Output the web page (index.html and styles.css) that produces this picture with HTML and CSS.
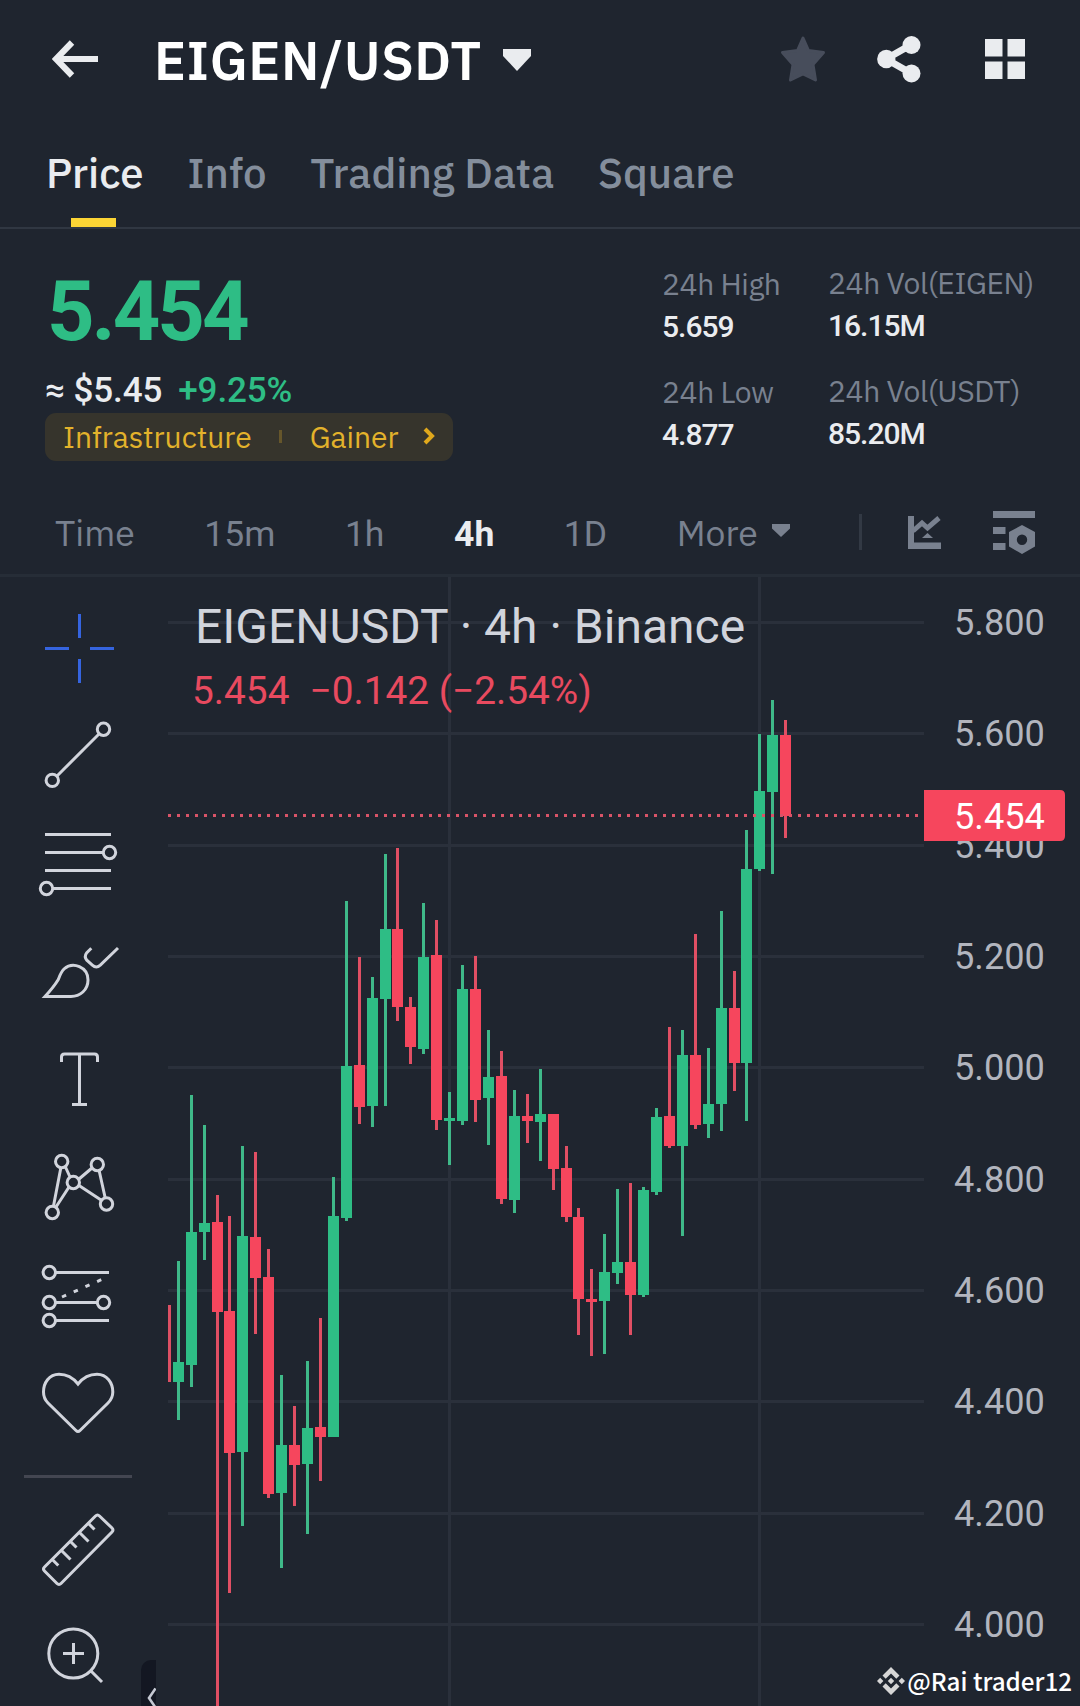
FILE: index.html
```html
<!DOCTYPE html>
<html lang="en">
<head>
    <title>EIGEN/USDT</title>
    <meta charset="UTF-8" />
    <meta name="viewport" content="width=device-width, initial-scale=1.0" />
    <link rel="stylesheet" href="styles.css">
</head>
<body>
    <header class="top-bar">
        <svg class="back" width="46" height="38" viewBox="0 0 46 38">
            <path d="M20 2.500L4 19l16 16.500M4 19h42" fill="none" stroke="#eaecef" stroke-width="6.200" />
        </svg>
        <h1>EIGEN/USDT</h1>
        <svg class="pair-arrow" width="28" height="22" viewBox="0 0 28 22">
            <path d="M0 0h28v7L14 22 0 7z" fill="#eaecef" />
        </svg>
        <div class="actions">
            <svg width="46" height="48" viewBox="0 0 46 48">
                <path d="M23 3l5.500 12.500 15 2-10.500 12 2.500 15.500L23 39l-12.500 6L13 29.500l-10.500-12 15-2z" fill="#474d5b" stroke="#474d5b" stroke-width="3" stroke-linejoin="round" />
            </svg>
            <svg class="share" width="44" height="48" viewBox="0 0 44 48">
                <path d="M9 24L34.500 9.500M9 24l25.500 14.500" stroke="#eaecef" stroke-width="7" />
                <g fill="#eaecef">
                    <circle cx="9.300" cy="24" r="9.200" />
                    <circle cx="34.500" cy="10" r="9" />
                    <circle cx="34.500" cy="38.500" r="9" />
                </g>
            </svg>
            <svg width="40" height="40" viewBox="0 0 40 40">
                <path d="M0 0h17.500v17.500H0zM22.500 0H40v17.500H22.500zM0 22.500h17.500V40H0zM22.500 22.500H40V40H22.500z" fill="#eaecef" />
            </svg>
        </div>
    </header>

    <nav class="tabs">
        <a class="tab active">Price</a>
        <a class="tab">Info</a>
        <a class="tab">Trading Data</a>
        <a class="tab">Square</a>
    </nav>

    <section class="ticker">
        <div class="quote">
            <div class="last-price">5.454</div>
            <div class="quote-sub">
                <span>≈ $5.45</span>
                <span class="change">+9.25%</span>
            </div>
            <div class="tags">
                <span>Infrastructure</span>
                <i class="tag-sep"></i>
                <span>Gainer</span>
                <svg class="tag-arrow" width="12" height="18" viewBox="0 0 12 18">
                    <path d="M2 2l7 7-7 7" fill="none" stroke="#e0a81c" stroke-width="4" />
                </svg>
            </div>
        </div>
        <div class="stats">
            <dl>
                <dt>24h High</dt>
                <dd>5.659</dd>
                <dt>24h Low</dt>
                <dd>4.877</dd>
            </dl>
            <dl class="volumes">
                <dt>24h Vol(EIGEN)</dt>
                <dd>16.15M</dd>
                <dt>24h Vol(USDT)</dt>
                <dd>85.20M</dd>
            </dl>
        </div>
    </section>

    <nav class="intervals">
        <a>Time</a>
        <a class="num">15m</a>
        <a class="num">1h</a>
        <a class="num active">4h</a>
        <a class="num">1D</a>
        <a>More</a>
        <svg class="more-arrow" width="18" height="13" viewBox="0 0 18 13">
            <path d="M0 0h18v4.500L9 13 0 4.500z" fill="#79818f" />
        </svg>
        <div class="interval-tools">
            <svg width="33" height="33" viewBox="0 0 33 33">
                <path d="M0 0h6v26.500h27V33H0z" fill="#79818f" />
                <path d="M5 15l9-8 5.500 5L31 2" fill="none" stroke="#79818f" stroke-width="5" />
                <path d="M14 22l5.500-5 5.500 5z" fill="#79818f" />
            </svg>
            <svg width="42" height="43" viewBox="0 0 42 43">
                <path d="M0 0h42v7H0zM0 16h12.500v7H0zM0 32h12.500v7H0z" fill="#79818f" />
                <path d="M29 14l13 7v14.500L29 43l-13-7.500V21zM29 23.500a5.200 5.200 0 1 0 0 10.400 5.200 5.200 0 1 0 0-10.400z" fill="#79818f" fill-rule="evenodd" />
            </svg>
        </div>
    </nav>

    <main class="chart-area">
        <aside class="toolbar">
            <!-- crosshair -->
            <svg class="tool selected" viewBox="0 0 84 84">
                <path d="M9 42.500h24M54 42.500h24M43.500 8v24M43.500 53v24" />
            </svg>
            <!-- trend line -->
            <svg class="tool" viewBox="0 0 84 84">
                <path d="M21 62l42-42" />
                <circle cx="67.500" cy="15.300" r="6.200" />
                <circle cx="16.300" cy="66.400" r="6.200" />
            </svg>
            <!-- fib retracement -->
            <svg class="tool" viewBox="0 0 84 84">
                <path d="M9 12.500h66M9 30.500h58M9 48.500h66M17 66.500h58" />
                <circle cx="73.500" cy="30.500" r="6.200" />
                <circle cx="10.500" cy="66.500" r="6.200" />
            </svg>
            <!-- brush -->
            <svg class="tool" viewBox="0 0 84 84">
                <path d="M9 66.500C15 60 19 55 22.300 49.500C24 45 25 42 28 39C37 31 52 37 52 50C52 60 44 66.500 35 66.500z" />
                <path d="M55.300 18.200l-4.500 4.500q-3 4 0 7.500l5.500 5q4 3.500 8 0L82 18" />
            </svg>
            <!-- text -->
            <svg class="tool" viewBox="0 0 84 84">
                <path d="M25.500 24v-5q0-3 3-3h30q3 0 3 3v5M43.500 16v50.500M36 66.500h15" />
            </svg>
            <!-- pattern -->
            <svg class="tool" viewBox="0 0 84 84">
                <path d="M25 21l-7.500 39M29 20l5 11M33 41L20 61M43 33l13-11M63 24l6 27M43 39.500L65 54" />
                <circle cx="25.700" cy="15.500" r="6.200" />
                <circle cx="61.300" cy="18.500" r="6.200" />
                <circle cx="37.300" cy="36.500" r="6.200" />
                <circle cx="16.300" cy="66.500" r="6.200" />
                <circle cx="70.500" cy="58" r="6.200" />
            </svg>
            <!-- forecast -->
            <svg class="tool" viewBox="0 0 84 84">
                <path d="M20 18.500h53M20 48.500h41M20 66.500h53" />
                <path d="M26 43l42-18.500" stroke-dasharray="4.500 8.300" />
                <circle cx="13.300" cy="18.500" r="6.200" />
                <circle cx="13.300" cy="48.500" r="6.200" />
                <circle cx="67.500" cy="48.500" r="6.200" />
                <circle cx="13.300" cy="66.500" r="6.200" />
            </svg>
            <!-- favourites -->
            <svg class="tool" viewBox="0 0 84 84">
                <path d="M42 22C36 14.500 30 12.300 23 12.300C13 12.300 7.500 21 7.500 30C7.500 35 9 38 12 41L40 68.500q2 2 4 0L72 41C75 38 76.800 35 76.800 30C76.800 21 71 12.300 61 12.300C54 12.300 48 14.500 42 22z" />
            </svg>
            <hr>
            <!-- ruler -->
            <svg class="tool" viewBox="0 0 84 84">
                <path d="M59.500 8L8.500 59q-2 2 0 4L21 75.500q2 2 4 0L76 24q2-2 0-4L63.500 8q-2-2-4 0z" />
                <path d="M16.300 51.500l6 6M25.500 42.500l9 9M34.500 33.500l6 6M43.500 24.500l9 9M52.500 15.500l6 6" />
            </svg>
            <!-- zoom in -->
            <svg class="tool" viewBox="0 0 84 84">
                <circle cx="37.300" cy="37.500" r="24.500" />
                <path d="M27 37.500h21M37.500 27v21M55 55l11 11" />
            </svg>
        </aside>

        <div class="chart">
            <svg id="chart" width="912" height="1129" viewBox="168 577 912 1129"></svg>
            <div class="legend">
                <div class="legend-title">EIGENUSDT · 4h · Binance</div>
                <div class="legend-values"><span>5.454</span><span>−0.142 (−2.54%)</span></div>
            </div>
        </div>

        <div class="collapse">
            <svg width="15" height="46" viewBox="0 0 15 46">
                <path d="M14.500 28.500L8 38l6.500 9.500" fill="none" stroke="#c5c9d3" stroke-width="2.600" />
            </svg>
        </div>

        <div class="watermark">
            <svg width="28" height="28" viewBox="0 0 28 28">
                <path d="M14 0l8.500 8.500-3.200 3.200L14 6.400l-5.300 5.300-3.200-3.200zM14 28l8.500-8.500-3.200-3.200-5.300 5.300-5.300-5.300-3.200 3.200zM14 10.800l3.200 3.200-3.200 3.200-3.200-3.200zM3.200 10.800L6.400 14l-3.200 3.200L0 14zM24.800 10.800L28 14l-3.200 3.200-3.200-3.200z" fill="#d6d6d6" />
            </svg>
            <span>@Rai trader12</span>
        </div>
    </main>

    <script src="chart.js"></script>
</body>
</html>
```
FILE: styles.css
```css
* {
    margin: 0;
    padding: 0;
    box-sizing: border-box;
}

body {
    width: 1080px;
    height: 1706px;
    overflow: hidden;
    font-family: "IBM Plex Sans", Roboto, sans-serif;
    color: #eaecef;
    background: #1f252f;
}

svg {
    display: block;
    flex: none;
}

/* Top bar */
.top-bar {
    display: flex;
    align-items: center;
    height: 118px;
    padding: 0 55px 0 52px;
}

.top-bar h1 {
    margin-left: 56px;
    width: 326px;
    font-size: 53.5px;
    font-weight: 600;
    line-height: 118px;
    padding-top: 1px;
    letter-spacing: 0.5px;
    color: #fff;
    white-space: nowrap;
}

.pair-arrow {
    margin: 2px 0 0 23px;
}

.actions {
    display: flex;
    align-items: center;
    margin-left: auto;
}

.share {
    margin: 0 64px 0 51px;
}

/* Page tabs */
.tabs {
    display: flex;
    gap: 43.6px;
    height: 111px;
    padding-left: 46px;
    border-bottom: 2px solid #303742;
}

.tab {
    position: relative;
    line-height: 110px;
    font-size: 42px;
    font-weight: 500;
    color: #848e9c;
}

.tab.active {
    color: #eaecef;
}

.tab.active::after {
    content: "";
    position: absolute;
    left: 25px;
    bottom: 0;
    width: 45px;
    height: 9px;
    background: #fcd535;
}

/* Ticker */
.ticker {
    display: flex;
    justify-content: space-between;
    height: 261px;
    padding: 27px 0 0 45px;
}

.last-price {
    height: 112px;
    padding-left: 2px;
    line-height: 112px;
    font-family: Roboto, sans-serif;
    font-size: 83px;
    font-weight: 700;
    letter-spacing: -3px;
    color: #2ebd85;
}

.quote-sub {
    display: flex;
    gap: 16px;
    height: 45px;
    line-height: 46px;
    font-family: Roboto, sans-serif;
    font-size: 35px;
    font-weight: 500;
    letter-spacing: -0.1px;
}

.change {
    color: #2ebd85;
}

.tags {
    display: flex;
    align-items: center;
    width: 408px;
    height: 48px;
    padding: 0 0 2px 18px;
    border-radius: 11px;
    background: #36342c;
    font-size: 30px;
    color: #e3b22b;
}

.tag-sep {
    width: 3px;
    height: 13px;
    margin: 0 28px 0 27px;
    background: #66562b;
}

.tag-arrow {
    margin-left: 24px;
}

.stats {
    display: flex;
    width: 418px;
    padding-top: 7px;
    font-size: 30px;
}

.stats dl {
    width: 166px;
}

.stats dt {
    line-height: 42px;
    color: #79818f;
    letter-spacing: -0.4px;
    white-space: nowrap;
}

.stats dd {
    margin-bottom: 22px;
    line-height: 44px;
    font-family: Roboto, sans-serif;
    font-weight: 500;
    letter-spacing: -1px;
}

.stats .volumes {
    width: auto;
    margin-top: -1px;
}

/* Interval picker */
.intervals {
    display: flex;
    align-items: center;
    gap: 69.6px;
    height: 87px;
    padding: 2px 44px 0 55px;
    border-bottom: 3px solid #262d37;
    font-size: 35.5px;
    color: #79818f;
}

.intervals .num {
    padding-top: 2px;
    font-family: Roboto, sans-serif;
}

.intervals .active {
    font-weight: 700;
    color: #eaecef;
}

.more-arrow {
    margin-left: -55px;
    margin-top: -6px;
}

.interval-tools {
    display: flex;
    flex: none;
    align-items: center;
    gap: 52px;
    height: 36px;
    margin: -2px 0 0 auto;
    padding-left: 46px;
    border-left: 3px solid #323944;
}

/* the last gap is narrower than the rest */
.more-arrow + .interval-tools {
    margin-left: -1px;
}

/* Chart */
.chart-area {
    position: relative;
    display: flex;
    height: 1129px;
}

.toolbar {
    display: flex;
    flex-direction: column;
    gap: 24px;
    width: 168px;
    padding: 29px 0 0 36px;
}

.tool {
    width: 84px;
    height: 84px;
    fill: none;
    stroke: #d1d4dc;
    stroke-width: 3;
}

.tool.selected {
    stroke: #3564df;
}

.toolbar hr {
    width: 108px;
    height: 3px;
    margin: 5px 0 6px -12px;
    border: 0;
    background: #434651;
}

.chart {
    position: relative;
    width: 912px;
}

.legend {
    position: absolute;
    left: 24px;
    top: 20px;
    font-family: Roboto, sans-serif;
    white-space: nowrap;
}

.legend-title {
    padding-left: 3px;
    line-height: 60px;
    font-size: 48px;
    color: #d1d4dc;
}

.legend-values {
    display: flex;
    gap: 20px;
    line-height: 68px;
    font-size: 38.8px;
    color: #e84a5f;
}

.axis-label {
    font: 36.2px Roboto, sans-serif;
    fill: #b2b5be;
}

.axis-label.last {
    fill: #fff;
}

.collapse {
    position: absolute;
    left: 141px;
    bottom: 0;
    width: 15px;
    height: 46px;
    border-radius: 10px 0 0 0;
    background: #131722;
}

.watermark {
    position: absolute;
    right: 8px;
    bottom: 7px;
    display: flex;
    align-items: center;
    gap: 2px;
    font: 500 24.2px/36px "Noto Sans CJK SC", "Noto Sans", sans-serif;
    color: #fff;
}
```
FILE: chart.js
```js
const UP = '#2ebd85';
const DOWN = '#f6465d';

// [direction, x, high, body top, body bottom, low]
const candles = [
    [1, 178.5, 1261, 1362, 1382, 1420],
    [1, 191.5, 1095, 1232, 1365, 1387],
    [1, 204.5, 1125, 1223, 1232, 1260],
    [0, 217.5, 1195, 1222, 1312, 1706],
    [0, 229.5, 1216, 1311, 1453, 1593],
    [1, 242.5, 1146, 1236, 1452, 1526],
    [0, 255.5, 1152, 1237, 1278, 1334],
    [0, 268.5, 1249, 1277, 1494, 1498],
    [1, 281.5, 1375, 1445, 1493, 1568],
    [0, 294.5, 1406, 1445, 1465, 1506],
    [1, 307.5, 1361, 1428, 1464, 1534],
    [0, 320.5, 1318, 1427, 1437, 1481],
    [1, 333.5, 1177, 1216, 1437, 1437],
    [1, 346.5, 901, 1066, 1218, 1221],
    [0, 359.5, 957, 1065, 1107, 1124],
    [1, 372.5, 977, 998, 1106, 1127],
    [1, 385.5, 854, 929, 999, 1106],
    [0, 397.5, 848, 929, 1007, 1021],
    [0, 410.5, 997, 1007, 1047, 1064],
    [1, 423.5, 903, 957, 1049, 1054],
    [0, 436.5, 920, 955, 1120, 1130],
    [1, 449.5, 1092, 1118, 1121, 1165],
    [1, 462.5, 965, 989, 1121, 1125],
    [0, 475.5, 956, 989, 1100, 1122],
    [1, 488.5, 1030, 1077, 1098, 1145],
    [0, 501.5, 1051, 1076, 1199, 1204],
    [1, 514.5, 1090, 1116, 1200, 1213],
    [0, 527.5, 1094, 1116, 1121, 1143],
    [1, 540.5, 1069, 1114, 1122, 1161],
    [0, 553.5, 1114, 1114, 1169, 1190],
    [0, 566.5, 1146, 1168, 1217, 1222],
    [0, 578.5, 1208, 1217, 1299, 1335],
    [0, 591.5, 1269, 1299, 1302, 1356],
    [1, 604.5, 1234, 1272, 1301, 1354],
    [1, 617.5, 1189, 1262, 1273, 1284],
    [0, 630.5, 1183, 1262, 1295, 1335],
    [1, 643.5, 1187, 1190, 1295, 1297],
    [1, 656.5, 1108, 1117, 1192, 1195],
    [0, 669.5, 1027, 1116, 1146, 1148],
    [1, 682.5, 1030, 1055, 1146, 1236],
    [0, 695.5, 934, 1055, 1125, 1129],
    [1, 708.5, 1048, 1104, 1124, 1138],
    [1, 721.5, 911, 1008, 1104, 1131],
    [0, 734.5, 971, 1008, 1063, 1091],
    [1, 746.5, 830, 869, 1063, 1121],
    [1, 759.5, 734, 791, 869, 871],
    [1, 772.5, 700, 735, 792, 874],
    [0, 785.5, 720, 735, 816, 838]
];

function rect(x, y, width, height, fill) {
    return `<rect x="${x}" y="${y}" width="${width}" height="${height}" fill="${fill}" />`;
}

let grid = rect(448, 577, 3, 1129, '#2a303b') + rect(758, 577, 3, 1129, '#2a303b');
let labels = '';
for (let i = 0; i < 10; i++) {
    const y = Math.round(622 + i * 111.35);
    grid += rect(168, y - 1, 756, 3, '#2a303b');
    labels += `<text class="axis-label" x="954" y="${y + 13}">${(5.8 - i * 0.2).toFixed(3)}</text>`;
}

// first candle is cut off by the left edge of the chart
let bars = rect(168, 1305, 3, 77, '#dc5064');
candles.forEach(([up, x, high, top, bottom, low]) => {
    bars += rect(x - 1.5, high, 3, low - high, up ? '#3fb989' : '#e04f64');
    bars += rect(x - 5.5, top, 11, bottom - top, up ? UP : DOWN);
});

const lastPrice = '<path d="M168 815.500H922" stroke="#d95468" stroke-width="3" stroke-dasharray="3 6" />' +
    `<path d="M924 790h136q5 0 5 5v41q0 5-5 5H924z" fill="${DOWN}" />` +
    '<text class="axis-label last" x="954" y="829">5.454</text>';

document.getElementById('chart').innerHTML = grid + labels + bars + lastPrice;
```
